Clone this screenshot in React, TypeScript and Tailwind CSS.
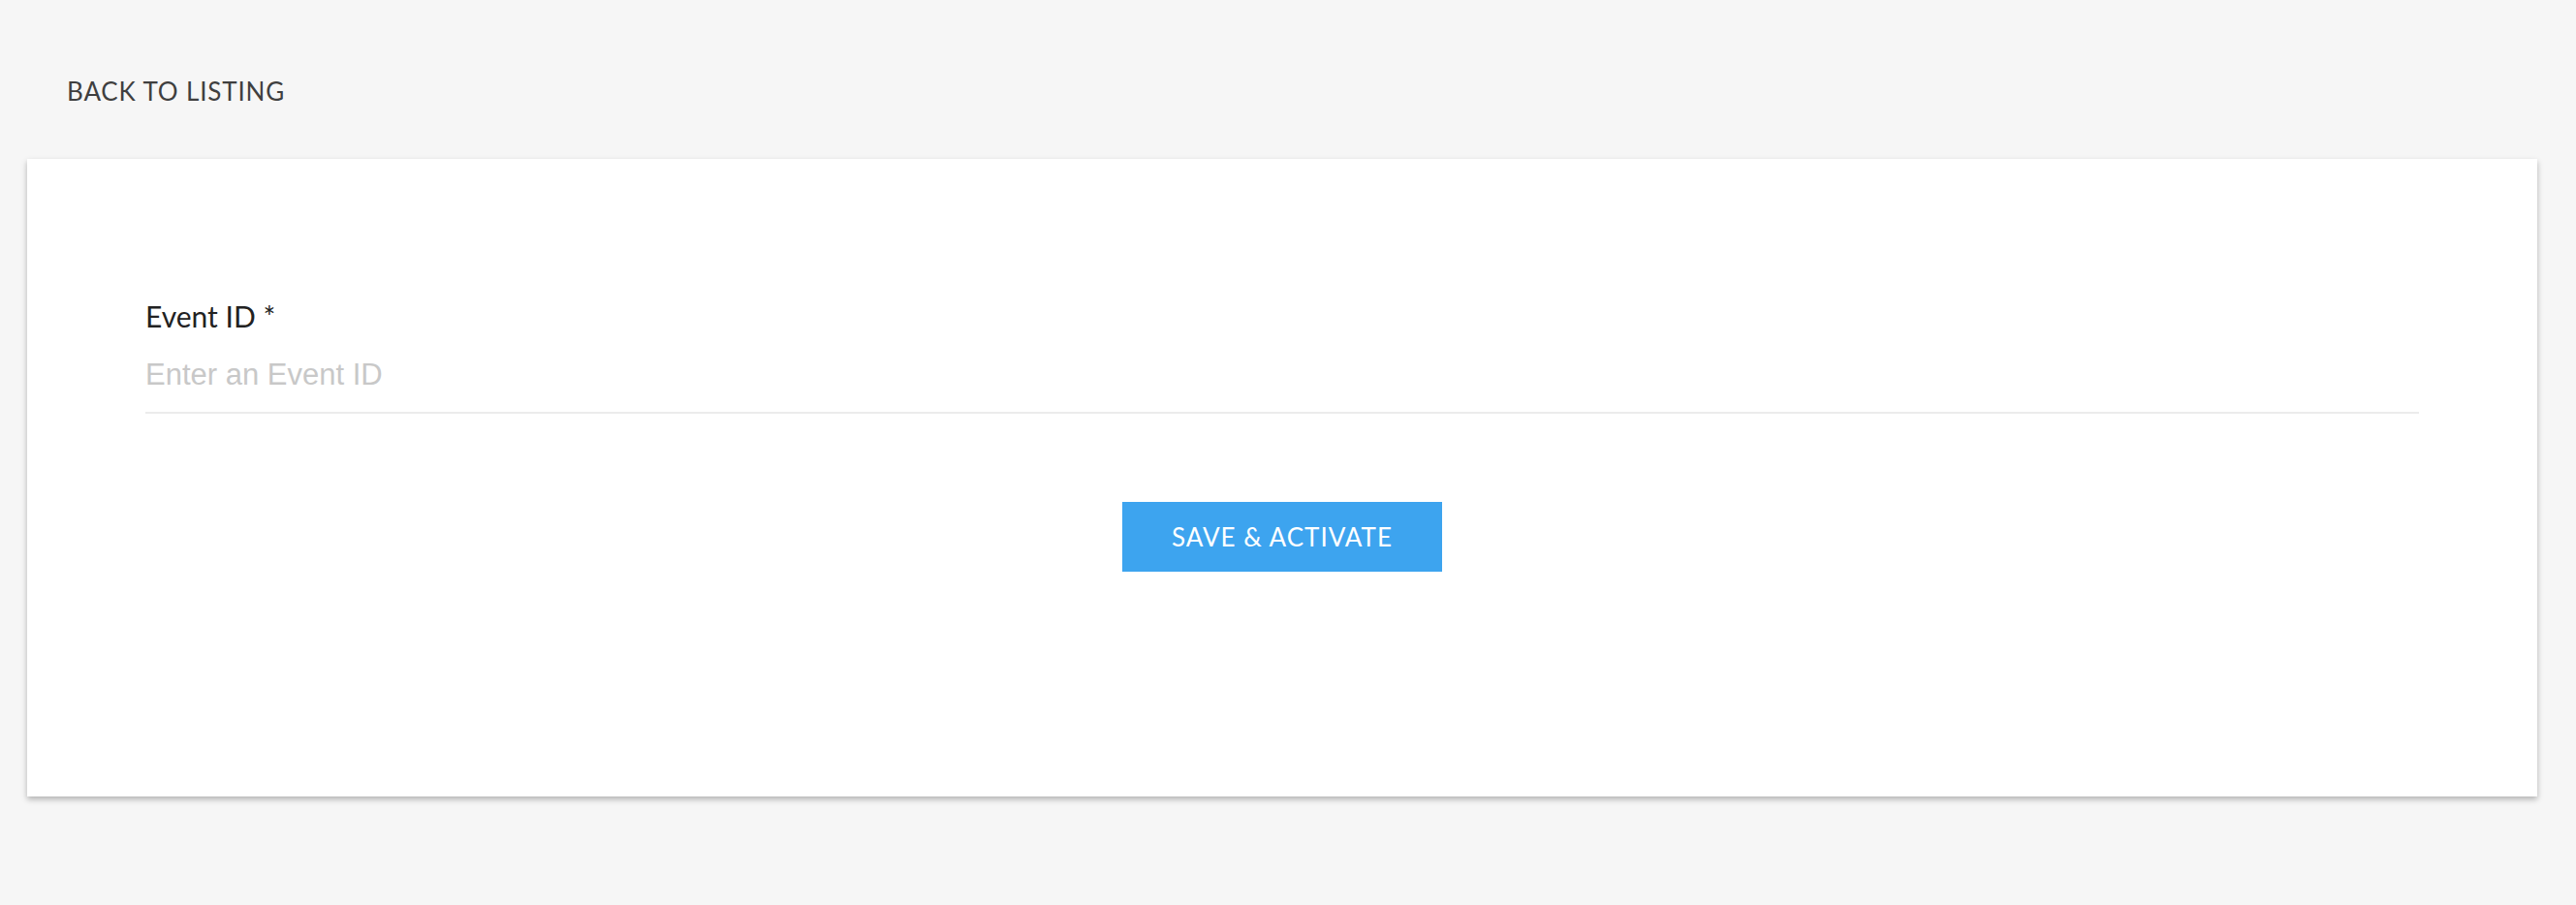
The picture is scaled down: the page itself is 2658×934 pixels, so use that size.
import React from "react";

export default function App() {
  return (
    <div className="min-h-[934px] w-full bg-[#f6f6f6] [font-family:Lato,'Open_Sans',sans-serif]">
      <div className="pl-[69px] pt-[78px]">
        <a className="block text-[26px] leading-[32px] text-[#3f3f3f] uppercase tracking-[0.85px]">
          BACK TO LISTING
        </a>
      </div>
      <div className="mt-[54px] ml-[28px] mr-[40px] h-[658px] bg-white shadow-[0_3px_6px_rgba(0,0,0,0.28)] px-[122px] pt-[144px]">
        <label className="block text-[30px] leading-[36px] text-[#222222]">
          Event ID *
        </label>
        <div className="mt-[25px] border-b-2 border-[#ececec] pb-[20px]">
          <input
            className="block w-full bg-transparent outline-none text-[31px] leading-[36px] h-[36px] text-[#333] placeholder:text-[#c8c8c8] [font-family:'Liberation_Sans',Arial,sans-serif]"
            placeholder="Enter an Event ID"
          />
        </div>
        <div className="mt-[91px] flex justify-center">
          <button className="w-[330px] h-[72px] bg-[#3da4ef] text-white text-[26px] uppercase tracking-[1px]">
            SAVE &amp; ACTIVATE
          </button>
        </div>
      </div>
    </div>
  );
}
